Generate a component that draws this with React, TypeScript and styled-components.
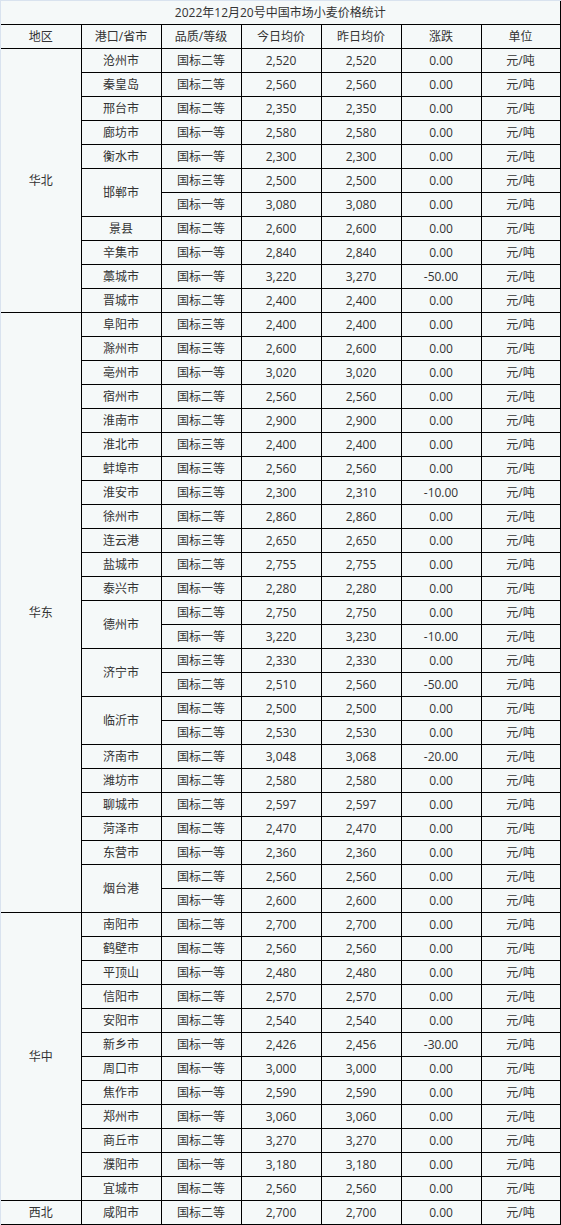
import styled, { createGlobalStyle } from 'styled-components';

interface PriceRow {
  grade: string;
  today: string;
  yesterday: string;
  change: string;
}

interface City {
  name: string;
  rows: PriceRow[];
}

interface Region {
  name: string;
  cities: City[];
}

function row(grade: string, today: string, yesterday: string, change = "0.00"): PriceRow {
  return { grade, today, yesterday, change };
}

const regions: Region[] = [
  {
    name: "华北",
    cities: [
      { name: "沧州市", rows: [row("国标二等", "2,520", "2,520")] },
      { name: "秦皇岛", rows: [row("国标二等", "2,560", "2,560")] },
      { name: "邢台市", rows: [row("国标二等", "2,350", "2,350")] },
      { name: "廊坊市", rows: [row("国标一等", "2,580", "2,580")] },
      { name: "衡水市", rows: [row("国标一等", "2,300", "2,300")] },
      { name: "邯郸市", rows: [row("国标三等", "2,500", "2,500"), row("国标一等", "3,080", "3,080")] },
      { name: "景县", rows: [row("国标二等", "2,600", "2,600")] },
      { name: "辛集市", rows: [row("国标一等", "2,840", "2,840")] },
      { name: "藁城市", rows: [row("国标一等", "3,220", "3,270", "-50.00")] },
      { name: "晋城市", rows: [row("国标二等", "2,400", "2,400")] },
    ],
  },
  {
    name: "华东",
    cities: [
      { name: "阜阳市", rows: [row("国标三等", "2,400", "2,400")] },
      { name: "滁州市", rows: [row("国标三等", "2,600", "2,600")] },
      { name: "亳州市", rows: [row("国标一等", "3,020", "3,020")] },
      { name: "宿州市", rows: [row("国标二等", "2,560", "2,560")] },
      { name: "淮南市", rows: [row("国标二等", "2,900", "2,900")] },
      { name: "淮北市", rows: [row("国标三等", "2,400", "2,400")] },
      { name: "蚌埠市", rows: [row("国标三等", "2,560", "2,560")] },
      { name: "淮安市", rows: [row("国标三等", "2,300", "2,310", "-10.00")] },
      { name: "徐州市", rows: [row("国标二等", "2,860", "2,860")] },
      { name: "连云港", rows: [row("国标三等", "2,650", "2,650")] },
      { name: "盐城市", rows: [row("国标二等", "2,755", "2,755")] },
      { name: "泰兴市", rows: [row("国标一等", "2,280", "2,280")] },
      { name: "德州市", rows: [row("国标二等", "2,750", "2,750"), row("国标一等", "3,220", "3,230", "-10.00")] },
      { name: "济宁市", rows: [row("国标三等", "2,330", "2,330"), row("国标二等", "2,510", "2,560", "-50.00")] },
      { name: "临沂市", rows: [row("国标二等", "2,500", "2,500"), row("国标二等", "2,530", "2,530")] },
      { name: "济南市", rows: [row("国标二等", "3,048", "3,068", "-20.00")] },
      { name: "潍坊市", rows: [row("国标二等", "2,580", "2,580")] },
      { name: "聊城市", rows: [row("国标二等", "2,597", "2,597")] },
      { name: "菏泽市", rows: [row("国标二等", "2,470", "2,470")] },
      { name: "东营市", rows: [row("国标一等", "2,360", "2,360")] },
      { name: "烟台港", rows: [row("国标二等", "2,560", "2,560"), row("国标一等", "2,600", "2,600")] },
    ],
  },
  {
    name: "华中",
    cities: [
      { name: "南阳市", rows: [row("国标二等", "2,700", "2,700")] },
      { name: "鹤壁市", rows: [row("国标二等", "2,560", "2,560")] },
      { name: "平顶山", rows: [row("国标一等", "2,480", "2,480")] },
      { name: "信阳市", rows: [row("国标二等", "2,570", "2,570")] },
      { name: "安阳市", rows: [row("国标二等", "2,540", "2,540")] },
      { name: "新乡市", rows: [row("国标一等", "2,426", "2,456", "-30.00")] },
      { name: "周口市", rows: [row("国标一等", "3,000", "3,000")] },
      { name: "焦作市", rows: [row("国标一等", "2,590", "2,590")] },
      { name: "郑州市", rows: [row("国标一等", "3,060", "3,060")] },
      { name: "商丘市", rows: [row("国标二等", "3,270", "3,270")] },
      { name: "濮阳市", rows: [row("国标一等", "3,180", "3,180")] },
      { name: "宜城市", rows: [row("国标二等", "2,560", "2,560")] },
    ],
  },
  {
    name: "西北",
    cities: [
      { name: "咸阳市", rows: [row("国标二等", "2,700", "2,700")] },
    ],
  },
];

const headers = ["地区", "港口/省市", "品质/等级", "今日均价", "昨日均价", "涨跌", "单位"];

const App = () => {
  return (
    <>
      <GlobalStyle />
      <Page>
        <PriceTable>
          <colgroup>
            <col width={80} />
            <col width={80} />
            <col width={80} />
            <col width={80} />
            <col width={80} />
            <col width={80} />
            <col width={79} />
          </colgroup>
          <tbody>
            <tr>
              <TitleCell colSpan={7}>2022年12月20号中国市场小麦价格统计</TitleCell>
            </tr>
            <tr>
              {headers.map((h, i) => <Cell key={h} $first={i === 0}>{h}</Cell>)}
            </tr>
            {regions.map(region => {
              const regionSpan = region.cities.reduce((n, c) => n + c.rows.length, 0);

              return region.cities.map((city, ci) => city.rows.map((r, ri) => (
                <tr key={`${region.name}-${city.name}-${ri}`}>
                  {ci === 0 && ri === 0 && <Cell $first rowSpan={regionSpan}>{region.name}</Cell>}
                  {ri === 0 && <Cell rowSpan={city.rows.length}>{city.name}</Cell>}
                  <Cell>{r.grade}</Cell>
                  <Cell>{r.today}</Cell>
                  <Cell>{r.yesterday}</Cell>
                  <Cell>{r.change}</Cell>
                  <Cell>元/吨</Cell>
                </tr>
              )));
            })}
          </tbody>
        </PriceTable>
      </Page>
    </>
  );
}

const GlobalStyle = createGlobalStyle`
  html, body {
    margin: 0;
    padding: 0;
    background: #d9e3ef;
  }
`;

const Page = styled.div`
  padding: 1px 0 0 1px;
  width: 561px;
  box-sizing: border-box;
`;

const PriceTable = styled.table`
  border-collapse: collapse;
  table-layout: fixed;
  width: 559px;
  background: #f5f9f9;
  font-family: "Open Sans", "Noto Sans CJK SC", sans-serif;
  font-size: 12px;
  color: #333;
`;

const Cell = styled.td<{ $first?: boolean }>`
  height: 23px;
  padding: 0;
  text-align: center;
  vertical-align: middle;
  line-height: 16px;
  border: 1px solid #000;
  border-left: ${p => (p.$first ? "none" : "1px solid #000")};
  white-space: nowrap;
`;

const TitleCell = styled(Cell)`
  border-top: none;
  border-left: none;
`;

export default App;
